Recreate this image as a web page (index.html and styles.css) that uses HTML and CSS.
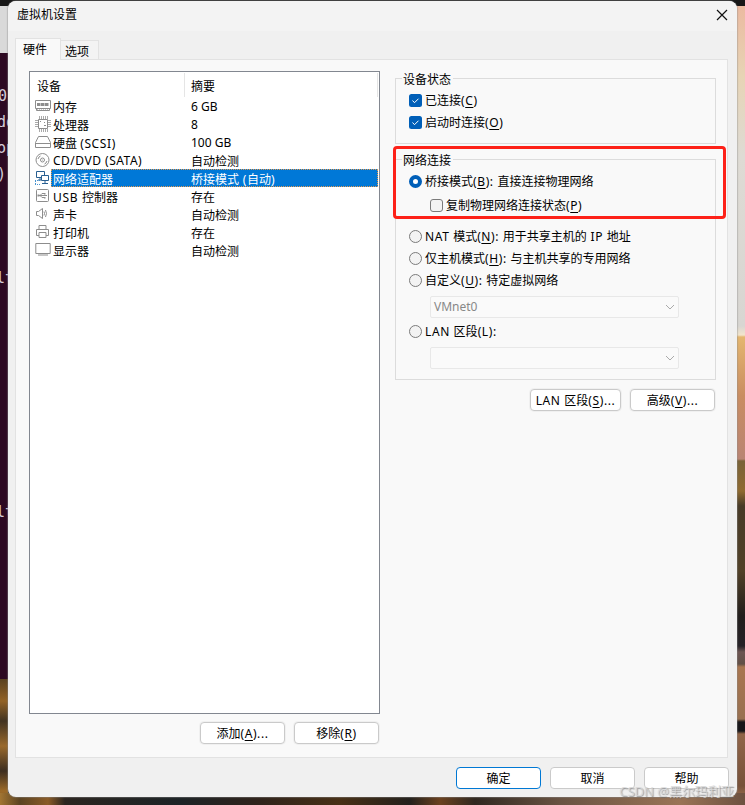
FILE: index.html
```html
<!DOCTYPE html>
<html lang="zh-CN">
<head>
<meta charset="utf-8">
<title>虚拟机设置</title>
<link rel="stylesheet" href="styles.css">
</head>
<body>
<div class="desktop">
  <div class="strip-left"></div>
  <div class="terminal"><span class="t1">0&nbsp;0</span><span class="t2">do</span><span class="t3">op</span><span class="t4">)</span><span class="t5">lt</span><span class="t6">lt</span></div>
  <div class="strip-right"></div>
  <div class="strip-bottom"></div>
</div>
<main class="window">
  <header class="titlebar"><span>虚拟机设置</span>
    <svg class="close" viewBox="0 0 12 12"><path d="M1 1l10 10M11 1L1 11"/></svg>
  </header>
  <nav class="tabs"><div class="tab active">硬件</div><div class="tab">选项</div></nav>
  <section class="panel">
    <div class="left">
      <div class="list">
        <div class="head"><span>设备</span><span>摘要</span></div>
        <div class="row"><svg viewBox="0 0 16 16"><path d="M.5 2.500h15v8H.5zM1.500 10.500v2h13v-2" /><path class="fill" d="M2 5h3.500v3H2zM6 5h3.500v3H6zM10 5h3.500v3H10z"/><path stroke-dasharray="1 1" d="M2 12h12"/></svg><span>内存</span><span class="en">6 GB</span></div>
        <div class="row"><svg viewBox="0 0 16 16"><path d="M3.500 3.500h9v9h-9z"/><path d="M4.500 0v3M6.500 0v3M8.500 0v3M10.500 0v3M12.500 0v3M4.500 13v3M6.500 13v3M8.500 13v3M10.500 13v3M12.500 13v3M0 4.500h3M0 6.500h3M0 8.500h3M0 10.500h3M13 4.500h3M13 6.500h3M13 8.500h3M13 10.500h3" stroke="#aaa"/><path class="fill" d="M5 5h1v1H5zM9 9h2v1H9zM9 6h1v1H9z"/></svg><span>处理器</span><span class="en">8</span></div>
        <div class="row"><svg viewBox="0 0 16 16"><path d="M3.500 2.500h9l3 6v5H.5v-5zM.5 9.500h15"/></svg><span>硬盘 <i>(SCSI)</i></span><span class="en">100 GB</span></div>
        <div class="row"><svg viewBox="0 0 16 16"><circle cx="7.500" cy="8" r="6.500"/><circle cx="7.500" cy="8" r="2"/><path d="M3 7l1-2 1.500-1M12 9l-1 2-1.500 1"/><circle class="fill" cx="7.500" cy="8" r=".5"/></svg><span class="cd">CD/DVD (SATA)</span><span>自动检测</span></div>
        <div class="row selected"><svg viewBox="0 0 16 16"><path class="blue" d="M6 7.500H1.500v-6h8V5M3 10h3M5 8v2M6.500 5.500h7v5h-7zM10 11v2M7 13.500h6"/><path class="dots" d="M0 10.500h5M0 14.500h6M.5 11v4"/></svg><span>网络适配器</span><span>桥接模式<i> (</i>自动<i>)</i></span></div>
        <div class="row"><svg viewBox="0 0 16 16"><rect x="1.500" y="1.500" width="12" height="12" rx="1"/><path d="M3 7.500h9M5 7.500l2-2h2M5 7.500l2 2h2"/><path class="fill" d="M2.500 6.500h2v2h-2zM9 5h1.500v1.500H9zM9 9h1.500v1.500H9z"/></svg><span><i>USB </i>控制器</span><span>存在</span></div>
        <div class="row"><svg viewBox="0 0 16 16"><path d="M1.500 5.500h2l4-3v10l-4-3h-2zM9 5.500q1 2 0 4M10.500 4q2 3.500 0 7"/></svg><span>声卡</span><span>自动检测</span></div>
        <div class="row"><svg viewBox="0 0 16 16"><path d="M4 5.500v-4h7v4M4 11.500H1.500v-6h12v6H11M4 8.500h7v5H4z"/></svg><span>打印机</span><span>存在</span></div>
        <div class="row"><svg viewBox="0 0 16 16"><path d="M.8 1.500h14.400v10H.8z"/><path class="fill" d="M3 12.500h10v1H3z"/></svg><span>显示器</span><span>自动检测</span></div>
      </div>
      <div class="actions"><button>添加<i>(<u>A</u>)...</i></button><button>移除<i>(<u>R</u>)</i></button></div>
    </div>
    <div class="right">
      <section class="group state">
        <h2>设备状态</h2>
        <div class="option"><svg class="check" viewBox="0 0 13 13"><rect width="13" height="13" rx="2.500"/><path d="M3.500 6.500l2 2.200 4-4"/></svg><span>已连接<i>(<u>C</u>)</i></span></div>
        <div class="option"><svg class="check" viewBox="0 0 13 13"><rect width="13" height="13" rx="2.500"/><path d="M3.500 6.500l2 2.200 4-4"/></svg><span>启动时连接<i>(<u>O</u>)</i></span></div>
      </section>
      <section class="group network">
        <h2>网络连接</h2>
        <div class="option bridge"><b class="radio on"></b><span>桥接模式<i>(<u>B</u>): </i>直接连接物理网络</span></div>
        <div class="option copy"><b class="box"></b><span>复制物理网络连接状态<i>(<u>P</u>)</i></span></div>
        <div class="option nat"><b class="radio"></b><span><i>NAT </i>模式<i>(<u>N</u>): </i>用于共享主机的<i> IP </i>地址</span></div>
        <div class="option"><b class="radio"></b><span>仅主机模式<i>(<u>H</u>): </i>与主机共享的专用网络</span></div>
        <div class="option"><b class="radio"></b><span>自定义<i>(<u>U</u>): </i>特定虚拟网络</span></div>
        <div class="select"><i>VMnet0</i><svg viewBox="0 0 10 6"><path d="M1 1l4 4 4-4"/></svg></div>
        <div class="option lan"><b class="radio"></b><span><i>LAN </i>区段<i>(L):</i></span></div>
        <div class="select"><i></i><svg viewBox="0 0 10 6"><path d="M1 1l4 4 4-4"/></svg></div>
      </section>
      <div class="advanced"><button class="wide"><i>LAN </i>区段<i>(<u>S</u>)...</i></button><button>高级<i>(<u>V</u>)...</i></button></div>
      <div class="highlight"></div>
    </div>
  </section>
  <footer><button class="primary">确定</button><button>取消</button><button>帮助</button></footer>
</main>
<div class="watermark">CSDN @黑尔玛利亚</div>
</body>
</html>
```
FILE: styles.css
```css
* { box-sizing: border-box; }
body {
  margin: 0; width: 745px; height: 805px; overflow: hidden; position: relative;
  padding: 1px 8px 8px;
  background: #171717;
  font: 12px/18px "Noto Sans", "Noto Sans CJK SC", sans-serif; color: #000;
}
i { font-style: normal; letter-spacing: .6px; white-space: pre; }
u { text-underline-offset: 2px; text-decoration-thickness: 1px; }
.desktop { position: absolute; inset: 0; }
.strip-left { position: absolute; left: 0; top: 6px; width: 8px; height: 799px;
  background: linear-gradient(#d9d9d9 0 47px, #2d0922 47px 673px, #59401f 673px, #926226 695px, #413321 715px, #99692c 740px, #3d2e20 765px, #9c6a28 785px, #765323); }
.terminal { position: absolute; inset: 0; width: 8px; height: 680px; overflow: hidden; font: 15px/18px "DejaVu Sans Mono", monospace; color: #d4ccd8; }
.terminal span { position: absolute; left: -2px; }
.terminal .t1 { top: 87px; }
.terminal .t2 { top: 113px; left: -3px; }
.terminal .t3 { top: 139px; left: -3px; }
.terminal .t4 { top: 165px; left: -3px; }
.terminal .t5 { top: 269px; left: -4px; }
.terminal .t6 { top: 503px; left: -4px; }
.strip-right { position: absolute; right: 0; top: 6px; width: 12px; height: 799px;
  background: linear-gradient(#ebbaa0, #e7d4b5 70px, #dedbd4 150px, #d8d6d2 320px, #f2e4cc 329px, #e4b66f 331px, #c98d61 390px, #b98473 453px, #796238 455px, #8f6a30 485px, #473a27 500px, #514027 565px, #211d1b 610px, #252126 640px, #6d5552 646px, #625046 658px, #a97650 661px, #987050 713px, #171619 716px, #171619 725px, #916548 728px, #775139 780px, #ad7d5a); }
.strip-bottom { position: absolute; left: 0; right: 0; bottom: 0; height: 12px;
  background: linear-gradient(90deg, #a27532, #5b4322 20px, #8a5b27 48px, #2b2520 65px, #1d2326 180px, #30231b 260px, #483016 340px, #24211d 410px, #6b411f 440px, #302820 475px, #695342 560px, #9a7456 680px, #6d5140); }
.window { position: relative; height: 796px; width: 729px; background: #f0f0f0; border-radius: 8px; overflow: hidden; box-shadow: 0 0 1px 1px #8b8b8b66; }
.titlebar { display: flex; height: 30px; align-items: center; justify-content: space-between; padding: 0 9px 2px 9px; background: #f3f3f3; }
.close { width: 12px; height: 12px; fill: none; stroke: #111; stroke-width: 1.2; }
.tabs { display: flex; height: 28px; padding: 7px 0 0 7px; align-items: flex-end; position: relative; z-index: 1; }
.tab { width: 38px; height: 19px; border: 1px solid #e2e2e2; border-left: 0; border-bottom: 0; background: #f3f3f3; padding: 1px 0 0 4px; line-height: 20px; }
.tab.active { width: 46px; height: 22px; margin-bottom: -1px; padding: 1px 0 0 7px; border-left: 1px solid #e2e2e2; background: #f9f9f9; }
.panel { display: flex; gap: 15px; width: 713px; height: 699px; margin-left: 7px; padding: 11px 0 0 13px; border: 1px solid #e2e2e2; background: #f9f9f9; }
.left { width: 351px; }
.list { height: 643px; border: 1px solid #828790; background: #fff; }
.head, .row { display: grid; }
.head { grid-template-columns: 153px 1fr; height: 24px; margin: 1px 1px 0; border-right: 1px solid #e5e5e5; align-items: center; }
.head span { height: 24px; line-height: 28px; padding-left: 6px; }
.head span + span { border-left: 1px solid #e5e5e5; }
.row { grid-template-columns: 18px 138px 1fr; height: 18px; line-height: 22px; padding-left: 5px; white-space: pre; }
.row svg { width: 16px; height: 16px; margin-top: 1px; fill: none; stroke: #8d8d8d; stroke-width: 1; }
.row .fill { fill: #8d8d8d; stroke: none; }
.row .blue { stroke: #285f91; }
.row .dots { stroke: #4793d0; stroke-dasharray: 1 1; }
.row i { letter-spacing: .65px; }
.row .cd { letter-spacing: .5px; }
.row .cd, .row .en { line-height: 20px; }
.selected { margin-right: 1px; color: #fff; background: linear-gradient(#0078d7, #0078d7) 21px 0 no-repeat; position: relative; }
.selected::after { content: ""; position: absolute; inset: 0 0 0 21px; border: 1px dotted #e59a50; }
.actions { display: flex; gap: 9px; justify-content: flex-end; margin: 8px 1px 0 0; }
button { width: 85px; height: 22px; padding: 0; border: 1px solid #cacaca; border-radius: 4px; background: #fff; color: #000; font: inherit; line-height: 22px; white-space: nowrap; box-shadow: 0 0 0 1px #f0f0f0; }
.right { position: relative; width: 321px; padding-top: 7px; }
.group { border: 1px solid #dcdcdc; padding: 0 13px; }
.group h2 { width: max-content; height: 18px; margin: -9px 0 0 -7px; padding: 0 2px 0 1px; background: #f9f9f9; font: inherit; line-height: 19px; }
.state { height: 66px; }
.option { display: flex; height: 22px; align-items: center; gap: 3px; line-height: 22px; white-space: pre; }
.option > :first-child { margin-bottom: 1px; }
.state h2 + .option { margin-top: 2px; }
.check { width: 13px; height: 13px; fill: #005fb8; }
.check path { fill: none; stroke: #fff; stroke-width: 1; }
.network { height: 221px; margin-top: 15px; }
.bridge { margin-top: 2px; }
.copy { margin: 2px 0 0 21px; }
.nat { margin-top: 9px; }
.radio, .box { width: 13px; height: 13px; border: 1px solid #7b7b7b; border-radius: 50%; background: #f3f3f3; }
.box { border-radius: 3px; }
.radio.on { border: 4px solid #005fb8; background: #fff; }
.select { display: flex; width: 249px; height: 22px; margin: 4px 0 0 21px; padding: 0 3px; align-items: center; justify-content: space-between; border: 1px solid #e8e8e8; border-radius: 2px; background: #fafafa; color: #888; }
.select i { letter-spacing: 0; }
.select svg { width: 10px; height: 6px; fill: none; stroke: #aaa; }
.lan { margin-top: 3px; }
.advanced { display: flex; justify-content: flex-end; gap: 9px; margin: 9px 1px 0 0; }
.wide { width: 91px; }
.highlight { position: absolute; left: -2px; top: 75px; width: 333px; height: 73px; border: 3px solid #fd2118; border-radius: 4px; }
footer { display: flex; justify-content: flex-end; gap: 9px; padding: 9px 8px 0; }
footer button { box-shadow: none; }
.primary { border-color: #0078d4; }
.watermark { position: absolute; right: 11px; top: 782px; font-size: 13px; line-height: 18px; color: #d7d7d7cc; text-shadow: 1px 1px 1px #66666699; white-space: nowrap; }
```
